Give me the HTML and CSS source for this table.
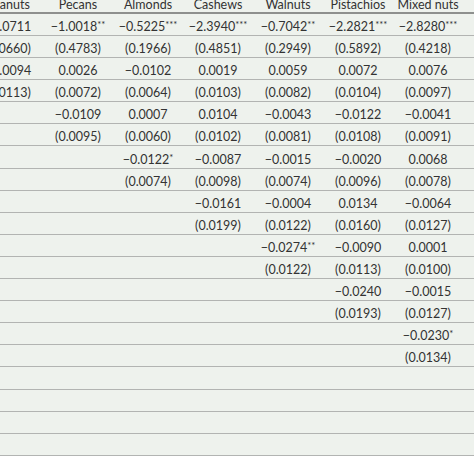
FILE: index.html
```html
<!DOCTYPE html>
<html>
<head>
<meta charset="utf-8">
<link rel="stylesheet" href="styles.css">
</head>
<body>
<div class="frame">
<table class="tbl">
<thead>
<tr><th>Peanuts</th><th>Pecans</th><th>Almonds</th><th>Cashews</th><th>Walnuts</th><th>Pistachios</th><th>Mixed nuts</th><th class="pad"></th></tr>
</thead>
<tbody>
<tr><td>−1.0711</td><td>−1.0018<sup>**</sup></td><td>−0.5225<sup>***</sup></td><td>−2.3940<sup>***</sup></td><td>−0.7042<sup>**</sup></td><td>−2.2821<sup>***</sup></td><td>−2.8280<sup>***</sup></td><td></td></tr>
<tr><td>(0.0660)</td><td>(0.4783)</td><td>(0.1966)</td><td>(0.4851)</td><td>(0.2949)</td><td>(0.5892)</td><td>(0.4218)</td><td></td></tr>
<tr><td>−0.0094</td><td>0.0026</td><td>−0.0102</td><td>0.0019</td><td>0.0059</td><td>0.0072</td><td>0.0076</td><td></td></tr>
<tr><td>(0.0113)</td><td>(0.0072)</td><td>(0.0064)</td><td>(0.0103)</td><td>(0.0082)</td><td>(0.0104)</td><td>(0.0097)</td><td></td></tr>
<tr><td></td><td>−0.0109</td><td>0.0007</td><td>0.0104</td><td>−0.0043</td><td>−0.0122</td><td>−0.0041</td><td></td></tr>
<tr><td></td><td>(0.0095)</td><td>(0.0060)</td><td>(0.0102)</td><td>(0.0081)</td><td>(0.0108)</td><td>(0.0091)</td><td></td></tr>
<tr><td></td><td></td><td>−0.0122<sup>*</sup></td><td>−0.0087</td><td>−0.0015</td><td>−0.0020</td><td>0.0068</td><td></td></tr>
<tr><td></td><td></td><td>(0.0074)</td><td>(0.0098)</td><td>(0.0074)</td><td>(0.0096)</td><td>(0.0078)</td><td></td></tr>
<tr><td></td><td></td><td></td><td>−0.0161</td><td>−0.0004</td><td>0.0134</td><td>−0.0064</td><td></td></tr>
<tr><td></td><td></td><td></td><td>(0.0199)</td><td>(0.0122)</td><td>(0.0160)</td><td>(0.0127)</td><td></td></tr>
<tr><td></td><td></td><td></td><td></td><td>−0.0274<sup>**</sup></td><td>−0.0090</td><td>0.0001</td><td></td></tr>
<tr><td></td><td></td><td></td><td></td><td>(0.0122)</td><td>(0.0113)</td><td>(0.0100)</td><td></td></tr>
<tr><td></td><td></td><td></td><td></td><td></td><td>−0.0240</td><td>−0.0015</td><td></td></tr>
<tr><td></td><td></td><td></td><td></td><td></td><td>(0.0193)</td><td>(0.0127)</td><td></td></tr>
<tr><td></td><td></td><td></td><td></td><td></td><td></td><td>−0.0230<sup>*</sup></td><td></td></tr>
<tr><td></td><td></td><td></td><td></td><td></td><td></td><td>(0.0134)</td><td></td></tr>
<tr><td></td><td></td><td></td><td></td><td></td><td></td><td></td><td></td></tr>
<tr><td></td><td></td><td></td><td></td><td></td><td></td><td></td><td></td></tr>
<tr><td></td><td></td><td></td><td></td><td></td><td></td><td></td><td></td></tr>
<tr><td></td><td></td><td></td><td></td><td></td><td></td><td></td><td></td></tr>
</tbody>
</table>
</div>
</body>
</html>
```
FILE: styles.css
```css
html, body {
  margin: 0;
  padding: 0;
  background: #ffffff;
}
.frame {
  width: 474px;
  height: 474px;
  overflow: hidden;
}
.tbl {
  margin-top: -2px;
  margin-left: -27px;
  border-collapse: collapse;
  table-layout: fixed;
  width: 540px;
  background: #eef2ed;
  font-family: Lato, "Open Sans", sans-serif;
  font-size: 12.5px;
  color: #333333;
}
.tbl th, .tbl td {
  width: 70px;
  padding: 0;
  text-align: center;
  white-space: nowrap;
}
.tbl th.pad { width: 50px; }
.tbl th {
  height: 14px;
  line-height: 14px;
  vertical-align: top;
  font-weight: normal;
  border-bottom: 2px solid #8e908e;
}
.tbl tbody tr {
  height: 22.1px;
}
.tbl td {
  padding-top: 5px;
  line-height: 16px;
  border-bottom: 1px solid #b2b4b2;
}
.tbl sup {
  font-size: 9.5px;
  line-height: 0;
  vertical-align: 3px;
}
```
